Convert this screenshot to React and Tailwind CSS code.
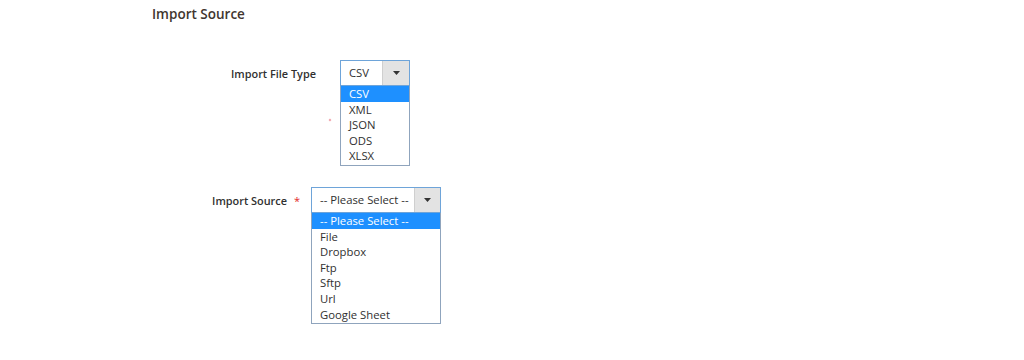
import React from "react";

const Arrow = () => (
  <svg width="7" height="4" viewBox="0 0 7 4" className="block">
    <path d="M0 0 L7 0 L3.5 4 Z" fill="#333" />
  </svg>
);

function Select({ value, options, width, divider }) {
  return (
    <div className="flex flex-col" style={{ width }}>
      <div className="flex h-[26px] border border-[#6ea4d9] bg-white">
        <div className="flex-1 overflow-hidden whitespace-nowrap pl-[8px] text-[11.3px] leading-[24px] text-[#303030]">{value}</div>
        <div className="flex items-center justify-center border-l border-[#cfcfcf] bg-[#e3e3e3]" style={{ width: divider }}>
          <Arrow />
        </div>
      </div>
      <div className="flex flex-col border border-t-0 border-[#8fa4bd] bg-white pb-[1px]">
        {options.map((o, i) => (
          <div
            key={o}
            className={
              "h-[15.6px] whitespace-nowrap pl-[8px] text-[11.3px] leading-[15.6px] " +
              (i === 0 ? "bg-[#1e90ff] text-white" : "text-[#303030]")
            }
          >
            {o}
          </div>
        ))}
      </div>
    </div>
  );
}

export default function App() {
  return (
    <div className="h-[360px] w-[1024px] bg-white" style={{ fontFamily: '"Open Sans", sans-serif' }}>
      <div className="pl-[152px] pt-[5px] text-[13.5px] font-semibold leading-[18px] text-[#41362f]">Import Source</div>
      <div className="mt-[37px] flex">
        <div className="w-[316px] pt-[6px] text-right text-[10.9px] font-semibold leading-[16px] text-[#303030]">Import File Type</div>
        <div className="relative ml-[24px]">
          <Select value="CSV" width="70px" divider="27px" options={["CSV", "XML", "JSON", "ODS", "XLSX"]} />
          <span className="absolute left-[-11px] top-[59px] h-[2px] w-[2px] rotate-45 bg-[#f0a0a8]" />
        </div>
      </div>
      <div className="mt-[21px] flex">
        <div className="w-[287px] pt-[6px] text-right text-[10.9px] font-semibold leading-[16px] text-[#303030]">Import Source</div>
        <div className="ml-[7px] w-[17px] pt-[6px] text-[11px] leading-[16px] text-[#e22626]">*</div>
        <Select
          value="-- Please Select --"
          width="130px"
          divider="26px"
          options={["-- Please Select --", "File", "Dropbox", "Ftp", "Sftp", "Url", "Google Sheet"]}
        />
      </div>
    </div>
  );
}
